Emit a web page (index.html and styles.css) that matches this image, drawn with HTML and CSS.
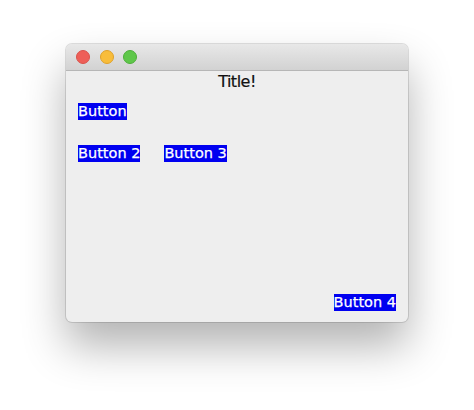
FILE: index.html
```html
<!DOCTYPE html>
<html>
<head>
<meta charset="utf-8">
<link rel="stylesheet" href="styles.css">
</head>
<body>
<div class="stage">
  <div class="window">
    <div class="titlebar">
      <span class="light red"></span>
      <span class="light yellow"></span>
      <span class="light green"></span>
    </div>
    <div class="content">
      <div class="title">Title!</div>
      <div class="row row1"><span class="btn">Button</span></div>
      <div class="row row2"><span class="btn">Button 2</span><span class="btn">Button 3</span></div>
      <div class="spacer"></div>
      <div class="row row4"><span class="btn">Button 4</span></div>
    </div>
  </div>
</div>
</body>
</html>
```
FILE: styles.css
```css
html, body {
  margin: 0;
  padding: 0;
  background: #ffffff;
}
.stage {
  width: 474px;
  height: 410px;
  padding: 44px 0 0 66px;
  box-sizing: border-box;
}
.window {
  width: 342px;
  height: 278px;
  border-radius: 6px;
  background: #eeeeee;
  box-shadow: 0 24px 44px rgba(0,0,0,0.3), 0 0 0 1px rgba(0,0,0,0.12);
  display: flex;
  flex-direction: column;
  overflow: hidden;
  font-family: "DejaVu Sans", sans-serif;
}
.titlebar {
  height: 27px;
  flex: none;
  background: linear-gradient(#e8e8e8, #d2d2d2);
  border-bottom: 1px solid #b6b6b6;
  display: flex;
  align-items: center;
  gap: 9.5px;
  padding-left: 10px;
  box-sizing: border-box;
}
.light {
  width: 14px;
  height: 14px;
  border-radius: 50%;
  display: block;
  box-sizing: border-box;
}
.red { background: #ee5f58; border: 0.5px solid #d9524b; }
.yellow { background: #f8bd3b; border: 0.5px solid #dea12b; }
.green { background: #5fc74a; border: 0.5px solid #4dae3a; }
.content {
  flex: 1;
  display: flex;
  flex-direction: column;
  padding: 0 12px 11px 12px;
}
.title {
  text-align: center;
  font-size: 16px;
  letter-spacing: -0.5px;
  line-height: 20px;
  color: #111;
  padding-top: 1px;
  -webkit-text-stroke: 0.2px #111;
}
.row {
  display: flex;
  gap: 24px;
}
.row1 { margin-top: 11px; }
.row2 { margin-top: 25px; }
.spacer { flex: 1; }
.row4 { justify-content: flex-end; }
.btn {
  background: #0000f0;
  color: #ffffff;
  font-size: 14.5px;
  line-height: 17px;
  height: 17px;
  padding: 0;
  display: block;
  -webkit-text-stroke: 0.25px #ffffff;
}
```
